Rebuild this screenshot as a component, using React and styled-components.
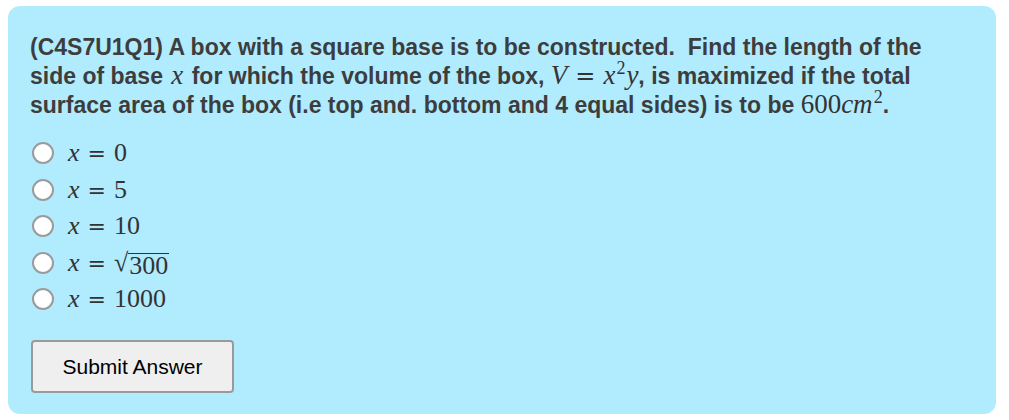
import React from "react";
import styled, { createGlobalStyle } from "styled-components";

const Global = createGlobalStyle`
  body {
    margin: 0;
    background: #ffffff;
    font-family: "Liberation Sans", Arial, sans-serif;
  }
`;

const Page = styled.div`
  padding: 6px 13px 6px 8px;
`;

const Panel = styled.div`
  background: #b1ebfe;
  border-radius: 12px;
  padding: 27px 22px 21px 22px;
  height: 408px;
  box-sizing: border-box;
`;

const Question = styled.div`
  font-weight: bold;
  font-size: 23px;
  line-height: 29px;
  color: #3d3d3d;
  white-space: nowrap;
`;

const M = styled.span`
  font-family: "Liberation Serif", "Times New Roman", serif;
  font-weight: normal;
  font-size: 27px;
  line-height: 0;
  color: #333;
  font-style: ${(p) => (p.$it ? "italic" : "normal")};
  margin: ${(p) => p.$m || "0"};
`;

const Eq = styled.span`
  font-family: "DejaVu Serif", serif;
  font-weight: normal;
  font-size: ${(p) => p.$size || "22px"};
  line-height: 0;
  color: #333;
  margin: ${(p) => p.$m || "0"};
`;

const Sup = styled.span`
  display: inline-block;
  font-size: 18px;
  line-height: 0;
  vertical-align: 10px;
  margin-left: 1px;
`;

const Options = styled.div`
  display: flex;
  flex-direction: column;
  gap: 14.5px;
  margin-top: 22px;
`;

const Option = styled.label`
  display: flex;
  align-items: center;
  gap: 14px;
  height: 22px;
`;

const Radio = styled.span`
  width: 18px;
  height: 18px;
  border-radius: 50%;
  border: 2px solid #9b9b9b;
  background: #fff;
  margin-left: 2px;
  flex: none;
`;

const Expr = styled.span`
  font-family: "Liberation Serif", "Times New Roman", serif;
  font-size: 26px;
  color: #333;
  display: flex;
  align-items: baseline;
  gap: 8px;
`;

const Root = styled.span`
  display: inline-flex;
  align-items: flex-end;
`;

const Radicand = styled.span`
  border-top: 1.5px solid #333;
  line-height: 24px;
  padding: 0 1px;
`;

const Button = styled.button`
  margin-top: 30px;
  width: 203px;
  height: 53px;
  background: #efefef;
  border: 2px solid #9a9a9a;
  border-radius: 4px;
  font-family: "Liberation Sans", Arial, sans-serif;
  font-size: 21px;
  color: #000;
  margin-left: 1px;
`;

const opts = ["0", "5", "10", "root", "1000"];

export default function App() {
  return (
    <Page>
      <Global />
      <Panel>
        <Question>
          (C4S7U1Q1) A box with a square base is to be constructed.&nbsp; Find the length of the
          <br />
          side of base <M $it $m="0 2px">x</M> for which the volume of the box,{" "}
          <M $it>V</M>
          <Eq $m="0 8px" $size="24px">=</Eq>
          <M $it>x</M>
          <M>
            <Sup>2</Sup>
          </M>
          <M $it $m="0 0 0 1px">y</M>, is maximized if the total
          <br />
          surface area of the box (i.e top and. bottom and 4 equal sides) is to be <M>600</M>
          <M $it>cm</M>
          <M>
            <Sup>2</Sup>
          </M>
          .
        </Question>
        <Options>
          {opts.map((o) => (
            <Option key={o}>
              <Radio />
              <Expr>
                <i>x</i>
                <Eq>=</Eq>
                {o === "root" ? (
                  <Root>
                    <span>√</span>
                    <Radicand>300</Radicand>
                  </Root>
                ) : (
                  <span>{o}</span>
                )}
              </Expr>
            </Option>
          ))}
        </Options>
        <Button>Submit Answer</Button>
      </Panel>
    </Page>
  );
}
